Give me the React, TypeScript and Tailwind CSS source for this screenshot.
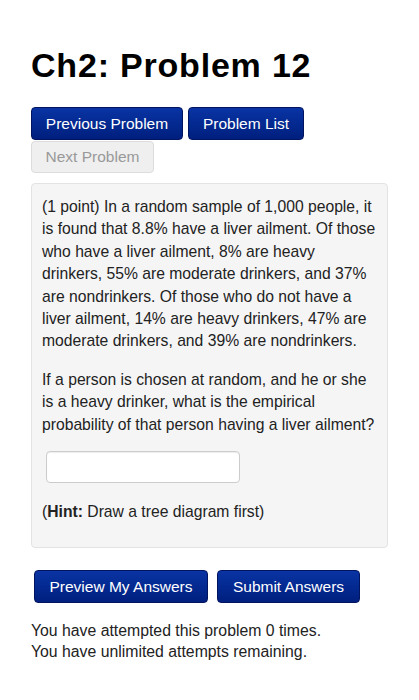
import React from "react";

const btnPrimary =
  "rounded-[4px] border border-[#00145f] bg-gradient-to-b from-[#0a34a4] to-[#001f7e] text-white text-[15.5px] leading-[20px] px-[10px] h-[33px] flex items-center justify-center whitespace-nowrap";

export default function App() {
  return (
    <div
      className="min-h-[700px] bg-white text-[#222] pl-[31px] pr-[31px]"
      style={{ fontFamily: '"Liberation Sans", Arial, Helvetica, sans-serif' }}
    >
      <h1 className="pt-[45px] text-[34px] leading-[40px] font-bold tracking-[0.8px] text-black">
        Ch2: Problem 12
      </h1>
      <div className="mt-[22px] flex flex-wrap gap-x-[5px] gap-y-[1px] w-[300px]">
        <button className={btnPrimary + " w-[152px]"}>Previous Problem</button>
        <button className={btnPrimary + " w-[116px]"}>Problem List</button>
        <button className="rounded-[4px] border border-[#dcdcdc] bg-[#efefef] text-[#999] text-[15.5px] leading-[20px] h-[32px] w-[123px] flex items-center justify-center">
          Next Problem
        </button>
      </div>
      <div className="mt-[10px] w-[357px] rounded-[4px] border border-[#e3e3e3] bg-[#f5f5f5] pl-[10px] pr-[4px] pt-[12px] pb-[24px] text-[15.7px] leading-[22.4px] whitespace-nowrap">
        <p>
          (1 point) In a random sample of 1,000 people, it
          <br />
          is found that 8.8% have a liver ailment. Of those
          <br />
          who have a liver ailment, 8% are heavy
          <br />
          drinkers, 55% are moderate drinkers, and 37%
          <br />
          are nondrinkers. Of those who do not have a
          <br />
          liver ailment, 14% are heavy drinkers, 47% are
          <br />
          moderate drinkers, and 39% are nondrinkers.
        </p>
        <p className="mt-[16px]">
          If a person is chosen at random, and he or she
          <br />
          is a heavy drinker, what is the empirical
          <br />
          probability of that person having a liver ailment?
        </p>
        <div className="mt-[15px] ml-[4px] h-[32px] w-[194px] rounded-[4px] border border-[#cccccc] bg-white shadow-[inset_0_1px_1px_rgba(0,0,0,0.075)]" />
        <p className="mt-[18px]">
          (<b>Hint:</b> Draw a tree diagram first)
        </p>
      </div>
      <div className="mt-[22px] ml-[3px] flex gap-[9px]">
        <button className={btnPrimary + " w-[174px]"}>Preview My Answers</button>
        <button className={btnPrimary + " w-[143px]"}>Submit Answers</button>
      </div>
      <div className="mt-[17px] text-[15.8px] leading-[21px]">
        <div>You have attempted this problem 0 times.</div>
        <div>You have unlimited attempts remaining.</div>
      </div>
    </div>
  );
}
